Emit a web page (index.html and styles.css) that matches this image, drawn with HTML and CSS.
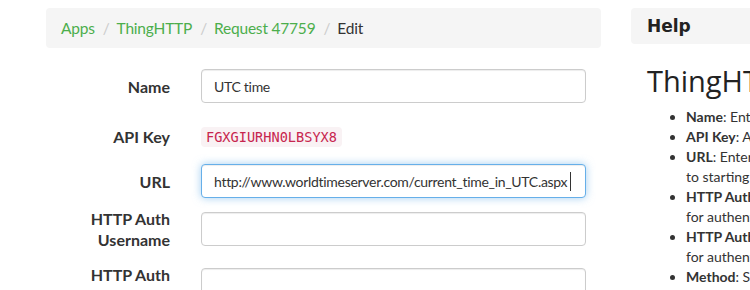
FILE: index.html
```html
<!DOCTYPE html>
<html lang="en">
<head>
    <meta charset="UTF-8">
    <meta name="viewport" content="width=device-width, initial-scale=1.0">
    <title>Edit ThingHTTP Request</title>
    <link rel="stylesheet" href="styles.css">
</head>
<body>
    <div class="page">
        <div class="main-col">
            <ol class="breadcrumb">
                <li><a href="#">Apps</a></li>
                <li><a href="#">ThingHTTP</a></li>
                <li><a href="#">Request 47759</a></li>
                <li class="active">Edit</li>
            </ol>

            <form class="form-horizontal">
                <div class="form-row">
                    <label class="control-label" for="name">Name</label>
                    <input class="form-control" id="name" type="text" value="UTC time">
                </div>
                <div class="form-row static-row">
                    <label class="control-label">API Key</label>
                    <div><code>FGXGIURHN0LBSYX8</code></div>
                </div>
                <div class="form-row">
                    <label class="control-label" for="url">URL</label>
                    <div class="input-wrap">
                        <input class="form-control focused" id="url" type="text" value="http://www.worldtimeserver.com/current_time_in_UTC.aspx">
                    </div>
                </div>
                <div class="form-row tall-row">
                    <label class="control-label" for="auth-user">HTTP Auth Username</label>
                    <input class="form-control" id="auth-user" type="text">
                </div>
                <div class="form-row">
                    <label class="control-label" for="auth-pass">HTTP Auth Password</label>
                    <input class="form-control" id="auth-pass" type="password">
                </div>
            </form>
        </div>

        <div class="side-col">
            <div class="panel-heading">Help</div>
            <h2>ThingHTTP</h2>
            <ul class="help-list">
                <li><strong>Name</strong>: Enter a unique name for your ThingHTTP request.</li>
                <li><strong>API Key</strong>: Auto-generated API key for the ThingHTTP request.</li>
                <li><strong>URL</strong>: Enter the address of the website you are requesting data from or writing data<br>to starting with either http:// or https://.</li>
                <li><strong>HTTP Auth Username</strong>: If your URL requires authentication, enter the username<br>for authentication to access private channels or websites.</li>
                <li><strong>HTTP Auth Password</strong>: If your URL requires authentication, enter the password<br>for authentication to access private channels or websites.</li>
                <li><strong>Method</strong>: Select the HTTP method required to access the URL.</li>
            </ul>
        </div>
    </div>
</body>
</html>
```

FILE: styles.css
```css
body {
    margin: 0;
    font-family: Lato, "Open Sans", sans-serif;
    font-size: 16px;
    color: #333;
    background: #fff;
    overflow: hidden;
}
.page {
    display: flex;
    gap: 30px;
    padding: 8px 0 0 46px;
    width: 1200px;
}
.main-col {
    width: 555px;
    flex: none;
}
.side-col {
    width: 560px;
    flex: none;
}

/* breadcrumb */
.breadcrumb {
    display: flex;
    align-items: center;
    height: 40px;
    box-sizing: border-box;
    margin: 0 0 21px;
    padding: 0 15px 1px;
    list-style: none;
    background: #f5f5f5;
    border-radius: 4px;
    font-size: 15.5px;
    letter-spacing: -0.2px;
}
.breadcrumb li + li::before {
    content: "/";
    color: #ccc;
    padding: 0 7px 0 8px;
}
.breadcrumb a {
    color: #4cae4c;
    text-decoration: none;
}
.breadcrumb .active {
    color: #333;
}

/* form */
.form-horizontal {
    display: flex;
    flex-direction: column;
    gap: 15px;
}
.form-row {
    display: grid;
    grid-template-columns: 124px 1fr;
    column-gap: 31px;
    align-items: center;
    padding-right: 15px;
}
.control-label {
    text-align: right;
    font-weight: 700;
    line-height: 21px;
}
.static-row {
    padding-top: 8px;
    padding-bottom: 2px;
}
.tall-row {
    margin-top: -5px;
}
.tall-row + .form-row {
    margin-top: -1px;
}
.form-control {
    display: block;
    width: 100%;
    height: 34px;
    box-sizing: border-box;
    padding: 6px 12px;
    font-family: inherit;
    font-size: 14px;
    letter-spacing: -0.3px;
    color: #333;
    background: #fff;
    border: 1px solid #ccc;
    border-radius: 4px;
    box-shadow: inset 0 1px 1px rgba(0, 0, 0, .075);
    outline: none;
}
.form-control.focused {
    border-color: #66afe9;
    box-shadow: inset 0 1px 1px rgba(0, 0, 0, .075), 0 0 8px rgba(102, 175, 233, .6);
}
.input-wrap {
    position: relative;
}
.input-wrap::after {
    content: "";
    position: absolute;
    left: 369px;
    top: 8px;
    width: 1px;
    height: 19px;
    background: #333;
}
code {
    display: inline-block;
    padding: 1px 5px;
    font-family: "DejaVu Sans Mono", monospace;
    font-size: 13.6px;
    line-height: 18px;
    color: #c7254e;
    background: #f9f2f4;
    border-radius: 4px;
}

/* help column */
.panel-heading {
    height: 36px;
    box-sizing: border-box;
    padding: 0 16px;
    display: flex;
    align-items: center;
    background: #f5f5f5;
    border-radius: 4px;
    font-family: "DejaVu Sans", sans-serif;
    font-weight: 700;
    font-size: 17px;
    color: #222;
}
.side-col h2 {
    margin: 20px 0 10px 16px;
    font-family: "Open Sans", sans-serif;
    font-weight: 400;
    font-size: 29px;
    line-height: 33px;
    color: #222;
}
.help-list {
    margin: 0;
    padding-left: 55px;
    font-size: 14px;
    line-height: 20px;
    white-space: nowrap;
}
```
